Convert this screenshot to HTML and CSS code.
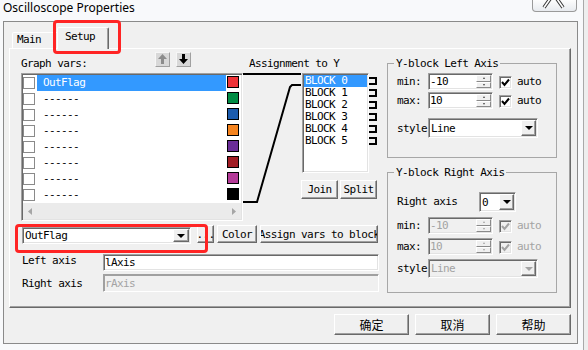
FILE: index.html
```html
<!DOCTYPE html>
<html lang="en">
<head>
<meta charset="utf-8">
<title>Oscilloscope Properties</title>
<link rel="stylesheet" href="styles.css">
</head>
<body>
<div class="screen">
  <header class="titlebar">
    <span class="title">Oscilloscope Properties</span>
    <div class="closebtn">
      <svg width="43" height="11" viewBox="0 0 43 11"><path d="M11 7.5 L20.5 -6 L30 7.5" fill="none" stroke="#3a3a3a" stroke-width="3.6"/><path d="M11 7.5 L20.5 -6 L30 7.5" fill="none" stroke="#ffffff" stroke-width="1.6"/></svg>
    </div>
  </header>

  <div class="win">
    <nav class="tabs">
      <div class="tab">Main</div>
      <div class="tab active">Setup</div>
    </nav>

    <section class="panel">
      <div class="leftpane">
        <div class="hdr">
          <span class="gv">Graph vars:</span>
          <span class="arrbtn"><svg width="13" height="13" viewBox="0 0 13 13"><polygon points="6.5,1 2,6 5,6 5,11 8,11 8,6 11,6" fill="#8c8c8c"/></svg></span>
          <span class="arrbtn down"><svg width="13" height="13" viewBox="0 0 13 13"><polygon points="5,1 8,1 8,6 11,6 6.5,11 2,6 5,6" fill="#000"/></svg></span>
          <span class="asg">Assignment to Y</span>
        </div>

        <div class="lists">
          <div class="varlist sunken">
            <div class="vrow sel"><span class="cb"></span><span class="vname">OutFlag</span><span class="sw c1"></span></div>
            <div class="vrow"><span class="cb"></span><span class="vname">------</span><span class="sw c2"></span></div>
            <div class="vrow"><span class="cb"></span><span class="vname">------</span><span class="sw c3"></span></div>
            <div class="vrow"><span class="cb"></span><span class="vname">------</span><span class="sw c4"></span></div>
            <div class="vrow"><span class="cb"></span><span class="vname">------</span><span class="sw c5"></span></div>
            <div class="vrow"><span class="cb"></span><span class="vname">------</span><span class="sw c6"></span></div>
            <div class="vrow"><span class="cb"></span><span class="vname">------</span><span class="sw c7"></span></div>
            <div class="vrow"><span class="cb"></span><span class="vname">------</span><span class="sw c8"></span></div>
            <div class="hscroll">
              <svg width="4" height="7" viewBox="0 0 4 7"><polygon points="4,0 0,3.5 4,7" fill="#a6a6a6"/></svg>
              <svg width="4" height="7" viewBox="0 0 4 7"><polygon points="0,0 4,3.5 0,7" fill="#a6a6a6"/></svg>
            </div>
          </div>

          <svg class="conn" width="58" height="148" viewBox="0 0 58 148">
            <path d="M0 1 H58" fill="none" stroke="#000" stroke-width="2"/>
            <path d="M0 129 H14 L47 14 L49 12 H58" fill="none" stroke="#000" stroke-width="2"/>
          </svg>

          <div class="blockcol">
            <div class="blockwrap">
              <div class="blocklist sunken">
                <div class="brow sel">BLOCK 0</div>
                <div class="brow">BLOCK 1</div>
                <div class="brow">BLOCK 2</div>
                <div class="brow">BLOCK 3</div>
                <div class="brow">BLOCK 4</div>
                <div class="brow">BLOCK 5</div>
              </div>
              <div class="brackets">
                <span class="brk"></span><span class="brk"></span><span class="brk"></span>
                <span class="brk"></span><span class="brk"></span><span class="brk"></span>
              </div>
            </div>
            <div class="jsrow">
              <div class="btn js">Join</div>
              <div class="btn js">Split</div>
            </div>
          </div>
        </div>

        <div class="comborow">
          <div class="combo sunken varcombo"><span class="cval">OutFlag</span><span class="ddbtn"><i class="tri"></i></span></div>
          <div class="btn dots">...</div>
          <div class="btn color">Color</div>
          <div class="btn assign"><span>Assign vars to block</span></div>
        </div>

        <div class="axrow l">
          <span class="axlbl">Left axis</span>
          <div class="field sunken">lAxis</div>
        </div>
        <div class="axrow r">
          <span class="axlbl">Right axis</span>
          <div class="field sunken disabled">rAxis</div>
        </div>
      </div>

      <div class="rightpane">
        <fieldset class="grp g1">
          <legend>Y-block Left Axis</legend>
          <div class="gbody b1">
            <div class="frow">
              <span class="flbl">min:</span>
              <div class="spin sunken"><span class="sval">-10</span><span class="spinbtns"><i class="sb up"></i><i class="sb dn"></i></span></div>
              <span class="ck sunken"><svg width="9" height="9" viewBox="0 0 9 9"><path d="M1 4 L3.5 7 L8 1.5" fill="none" stroke="#000" stroke-width="2"/></svg></span>
              <span class="auto">auto</span>
            </div>
            <div class="frow f2">
              <span class="flbl">max:</span>
              <div class="spin sunken"><span class="sval">10</span><span class="spinbtns"><i class="sb up"></i><i class="sb dn"></i></span></div>
              <span class="ck sunken"><svg width="9" height="9" viewBox="0 0 9 9"><path d="M1 4 L3.5 7 L8 1.5" fill="none" stroke="#000" stroke-width="2"/></svg></span>
              <span class="auto">auto</span>
            </div>
            <div class="srow s1">
              <span class="flbl st">style</span>
              <div class="combo sunken stylecombo"><span class="cval">Line</span><span class="ddbtn"><i class="tri"></i></span></div>
            </div>
          </div>
        </fieldset>

        <fieldset class="grp g2">
          <legend>Y-block Right Axis</legend>
          <div class="gbody b2">
            <div class="rarow">
              <span class="flbl wide">Right axis</span>
              <div class="combo sunken zerocombo"><span class="cval">0</span><span class="ddbtn"><i class="tri"></i></span></div>
            </div>
            <div class="frow f3 dis">
              <span class="flbl">min:</span>
              <div class="spin sunken disabled"><span class="sval">-10</span><span class="spinbtns"><i class="sb up"></i><i class="sb dn"></i></span></div>
              <span class="ck sunken disabled"><svg width="9" height="9" viewBox="0 0 9 9"><path d="M1 4 L3.5 7 L8 1.5" fill="none" stroke="#a3a3a3" stroke-width="2"/></svg></span>
              <span class="auto">auto</span>
            </div>
            <div class="frow f4 dis">
              <span class="flbl">max:</span>
              <div class="spin sunken disabled"><span class="sval">10</span><span class="spinbtns"><i class="sb up"></i><i class="sb dn"></i></span></div>
              <span class="ck sunken disabled"><svg width="9" height="9" viewBox="0 0 9 9"><path d="M1 4 L3.5 7 L8 1.5" fill="none" stroke="#a3a3a3" stroke-width="2"/></svg></span>
              <span class="auto">auto</span>
            </div>
            <div class="srow s2">
              <span class="flbl st">style</span>
              <div class="combo sunken stylecombo disabled"><span class="cval">Line</span><span class="ddbtn"><i class="tri"></i></span></div>
            </div>
          </div>
        </fieldset>
      </div>
    </section>

    <div class="dlgbtns">
      <div class="btn dbtn">确定</div>
      <div class="btn dbtn">取消</div>
      <div class="btn dbtn">帮助</div>
    </div>
  </div>

  <div class="mark m1"></div>
  <div class="mark m2"></div>
</div>
</body>
</html>
```

FILE: styles.css
```css
* { box-sizing: border-box; }
html, body { margin: 0; padding: 0; }
body {
  width: 588px; height: 350px; overflow: hidden;
  font-family: "DejaVu Sans Mono", "Liberation Mono", monospace;
  font-size: 11px; letter-spacing: -0.6px; line-height: 13px; color: #000;
}
.screen {
  position: relative; width: 588px; height: 350px;
  background: linear-gradient(to right, #f8f9fb 0, #f8f9fb 583px, #a9a9a9 583px, #a9a9a9 584px, #eeeeee 584px);
}

/* title bar */
.titlebar { height: 21px; display: flex; align-items: flex-start; padding-left: 3px; }
.title { font-family: "Noto Sans", sans-serif; font-size: 12px; letter-spacing: 0; line-height: 16px; }
.closebtn {
  margin-left: auto; margin-right: 11px; width: 45px; height: 12px;
  border: 1px solid #9a9a9a; border-top: none; border-radius: 0 0 4px 4px;
  background: linear-gradient(#fdfdfd, #e8ebef); overflow: hidden;
}
.closebtn svg { display: block; }

/* window body */
.win {
  margin-left: 3px; width: 575px; height: 323px;
  border: 1px solid #8a8a8a; background: #f0f0f0;
  padding: 0 6px 0 5px;
}
.tabs { height: 26px; display: flex; align-items: flex-end; padding-left: 3px; }
.tab {
  width: 47px; height: 16px; padding: 0 0 0 4px;
  background: #f0f0f0; border: 1px solid; border-bottom: none;
  border-color: #fff #696969 transparent #fff; border-radius: 2px 2px 0 0;
}
.tab.active {
  width: 52px; height: 22px; margin-left: -2px; margin-bottom: -1px;
  padding: 2px 0 0 7px; position: relative; z-index: 1;
  box-shadow: inset -1px 0 #a0a0a0;
}

.panel {
  height: 260px; display: flex; padding: 3px 0 0 11px;
  border: 1px solid; border-color: #fff #696969 #696969 #fff;
  box-shadow: inset -1px -1px #a0a0a0;
}

/* generic 3d */
.sunken {
  border: 1px solid; border-color: #a0a0a0 #fff #fff #a0a0a0;
  box-shadow: inset 1px 1px #696969, inset -1px -1px #e3e3e3;
  padding: 1px; background: #fff;
}
.btn {
  display: flex; align-items: center; justify-content: center;
  background: #f0f0f0; border: 1px solid; border-color: #fff #696969 #696969 #fff;
  box-shadow: inset -1px -1px #a0a0a0;
  white-space: nowrap; overflow: hidden;
}

/* left pane */
.leftpane { width: 358px; display: flex; flex-direction: column; }
.hdr { display: flex; height: 21px; }
.gv { width: 134px; padding-top: 5px; }
.arrbtn {
  width: 15px; height: 15px; background: #d8d8d8;
  border: 1px solid; border-color: #f6f6f6 #a0a0a0 #a0a0a0 #f6f6f6;
}
.arrbtn svg { display: block; }
.arrbtn.down { margin-left: 6px; }
.asg { margin-left: 58px; padding-top: 5px; }

.lists { display: flex; height: 148px; }
.varlist { width: 222px; display: flex; flex-direction: column; }
.vrow { display: flex; height: 16px; }
.cb { width: 12px; height: 12px; border: 1px solid #8a8a8a; background: #fff; margin-top: 2px; }
.vname { margin-left: 2px; width: 189px; height: 16px; padding: 1px 0 0 6px; white-space: nowrap; }
.vrow.sel .vname { background: #3399ff; color: #fff; }
.sw { width: 12px; height: 12px; margin: 1px 0 0 1px; border: 1px solid #000; }
.c1 { background: #ee3338; }
.c2 { background: #008c44; }
.c3 { background: #1c5cae; }
.c4 { background: #f5841f; }
.c5 { background: #6a2d97; }
.c6 { background: #a11c24; }
.c7 { background: #b43a98; }
.c8 { background: #000; }
.hscroll {
  height: 16px; background: #ebebeb; display: flex;
  justify-content: space-between; align-items: center; padding: 0 5px;
}
.hscroll svg { display: block; }

.conn { display: block; flex-shrink: 0; overflow: visible; }

.blockcol { width: 78px; display: flex; flex-direction: column; }
.blockwrap { display: flex; }
.blocklist { width: 67px; height: 100px; margin-left: 1px; }
.brow { height: 12px; line-height: 12px; padding-left: 1px; white-space: nowrap; }
.brow.sel { background: #3399ff; color: #fff; }
.brackets { width: 9px; padding-top: 4px; display: flex; flex-direction: column; gap: 4px; }
.brk { width: 8px; height: 8px; border: 2px solid #000; border-left: none; }
.jsrow { display: flex; gap: 2px; margin-top: 7px; }
.js { width: 37px; height: 19px; }

.comborow { display: flex; align-items: flex-start; height: 18px; margin-top: 4px; }
.combo { display: flex; }
.cval { flex: 1; padding-left: 1px; white-space: nowrap; overflow: hidden; }
.ddbtn {
  width: 16px; display: flex; align-items: center; justify-content: center;
  background: #f0f0f0; border: 1px solid; border-color: #fff #696969 #696969 #fff;
  box-shadow: inset -1px -1px #a0a0a0;
}
.tri {
  display: block; width: 0; height: 0;
  border-left: 4px solid transparent; border-right: 4px solid transparent;
  border-top: 4px solid #000;
}
.varcombo { margin: 2px 0 0 1px; width: 169px; height: 17px; }
.varcombo .ddbtn { width: 16px; }
.dots { margin-left: 6px; width: 17px; height: 18px; }
.color { margin-left: 3px; width: 40px; height: 18px; }
.assign { margin-left: 3px; width: 118px; height: 18px; }

.axrow { display: flex; }
.axrow.l { margin-top: 11px; height: 17px; }
.axrow.r { margin-top: 3px; height: 18px; }
.axrow.r .axlbl { padding-top: 3px; }
.axlbl { width: 81px; margin-left: 1px; white-space: nowrap; }
.field { flex: 1; display: flex; align-items: center; padding: 0 0 0 1px; }
.field.disabled { background: #f0f0f0; color: #a3a3a3; box-shadow: inset 1px 1px #a0a0a0; }

/* right pane */
.rightpane { width: 170px; margin-left: 8px; display: flex; flex-direction: column; }
.grp { margin: 0; padding: 0; min-width: 0; border: 1px solid #a7a7a7; }
.grp legend { margin-left: 6px; padding: 0 2px; line-height: 13px; white-space: nowrap; }
.g1 { margin-top: 5px; height: 101px; }
.g2 { margin-top: 8px; height: 127px; }
.gbody { padding-left: 9px; }
.b1 { padding-top: 3px; }
.b2 { padding-top: 13px; }

.frow { display: flex; height: 17px; }
.f2 { margin-top: 2px; }
.f3 { margin-top: 5px; }
.f4 { margin-top: 4px; }
.flbl { width: 31px; padding-top: 2px; white-space: nowrap; }
.flbl.wide { width: 82px; padding-top: 3px; }
.spin { width: 65px; height: 17px; display: flex; }
.sval { flex: 1; padding-left: 0; }
.spinbtns { width: 15px; display: flex; flex-direction: column; }
.sb {
  flex: 1; display: flex; align-items: center; justify-content: center;
  background: #f0f0f0; border: 1px solid; border-color: #fff #8a8a8a #8a8a8a #fff;
}
.sb::after {
  content: ""; display: block; width: 0; height: 0;
  border-left: 1.5px solid transparent; border-right: 1.5px solid transparent;
}
.sb.up::after { border-bottom: 2px solid #444; }
.sb.dn::after { border-top: 2px solid #444; }
.ck {
  width: 13px; height: 13px; margin: 3px 0 0 6px; padding: 1px;
  display: flex; align-items: center; justify-content: center;
}
.ck svg { display: block; }
.auto { margin-left: 5px; padding-top: 2px; }

.srow { display: flex; }
.s1 { margin-top: 9px; height: 20px; }
.s2 { margin-top: 4px; height: 19px; }
.flbl.st { padding-top: 4px; }
.s2 .flbl.st { padding-top: 3px; }
.stylecombo { width: 110px; height: 100%; }
.stylecombo .cval, .zerocombo .cval { display: flex; align-items: center; }
.stylecombo .ddbtn { width: 15px; }

.rarow { display: flex; height: 20px; }
.zerocombo { width: 37px; height: 20px; }
.zerocombo .ddbtn { width: 15px; }

.disabled { background: #f0f0f0; color: #a3a3a3; }
.dis .auto { color: #a3a3a3; }
.disabled .tri { border-top-color: #a3a3a3; }
.disabled .sb.up::after { border-bottom-color: #a3a3a3; }
.disabled .sb.dn::after { border-top-color: #a3a3a3; }
.disabled .cval { color: #a3a3a3; }

/* dialog buttons */
.dlgbtns { display: flex; justify-content: flex-end; gap: 6px; margin-top: 6px; }
.dbtn {
  width: 75px; height: 21px;
  font-family: "Noto Sans CJK SC", sans-serif; font-size: 12px; letter-spacing: 0; line-height: 14px;
}

/* red annotation frames */
.mark { position: absolute; border: 3px solid #ff2424; border-radius: 4px; }
.m1 { left: 53px; top: 20px; width: 68px; height: 34px; }
.m2 { left: 15px; top: 224px; width: 193px; height: 29px; }
```
